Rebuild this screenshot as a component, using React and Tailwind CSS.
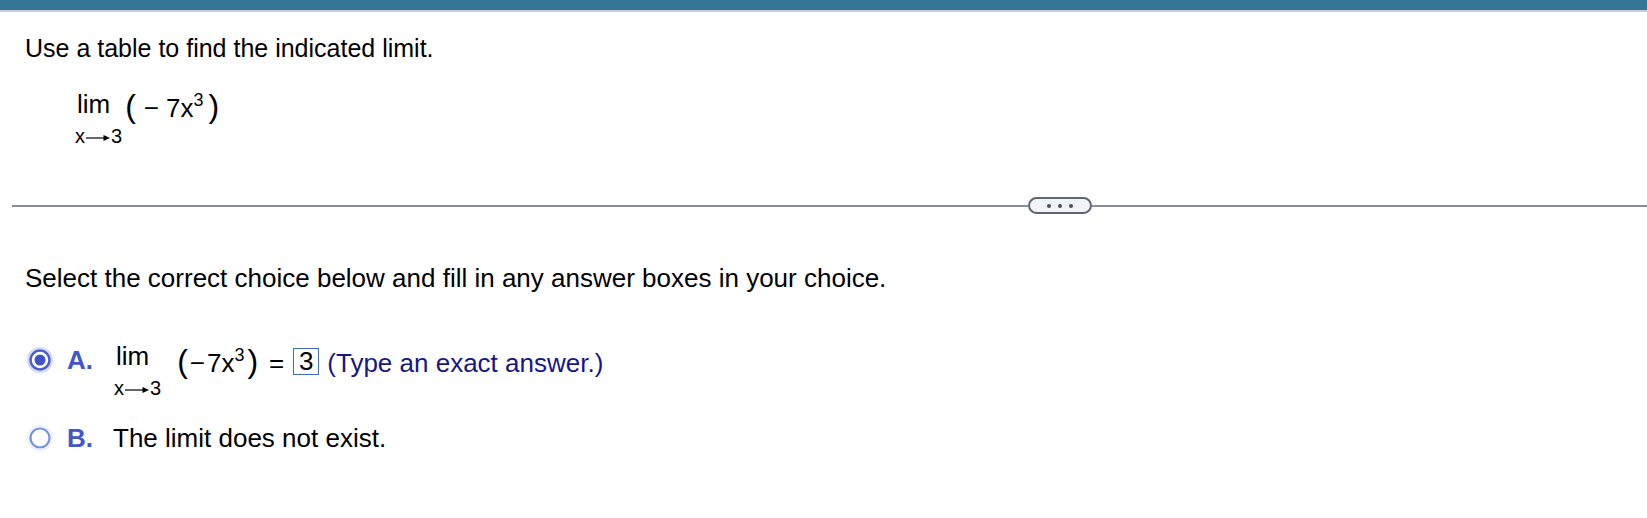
import React from "react";

function Arrow() {
  return (
    <svg width="26" height="10" viewBox="0 0 26 10" className="mt-[4px] shrink-0">
      <line x1="1" y1="5" x2="22" y2="5" stroke="#000" strokeWidth="1.2" />
      <path d="M18.5 2 L25 5 L18.5 8 Z" fill="#000" />
    </svg>
  );
}

function Lim() {
  return (
    <div className="flex flex-col items-start">
      <div className="ml-[2px] text-[26px] leading-[26px]">lim</div>
      <div className="mt-[9px] text-[20px] leading-[20px] whitespace-nowrap flex items-center">
        <span>x</span>
        <Arrow />
        <span>3</span>
      </div>
    </div>
  );
}

function Expr({ outer, minus, seven, close, children }) {
  return (
    <div className={"flex items-baseline whitespace-pre " + outer}>
      <span className="text-[32px] leading-none">(</span>
      <span className={"text-[26px] leading-none " + minus}>−</span>
      <span className={"text-[26px] leading-none " + seven}>
        7x
        <span className="text-[18px] leading-[0] align-[11px]">3</span>
      </span>
      <span className={"text-[32px] leading-none " + close}>)</span>
      {children}
    </div>
  );
}

function RadioOn() {
  return (
    <svg width="26" height="26" viewBox="0 0 26 26" className="shrink-0">
      <circle cx="13" cy="13" r="12" fill="none" stroke="#d3daf5" strokeWidth="2" />
      <circle cx="13" cy="13" r="9.5" fill="#fff" stroke="#4a5ed0" strokeWidth="2.5" />
      <circle cx="13" cy="13" r="5.5" fill="#4053c8" />
    </svg>
  );
}

function RadioOff() {
  return (
    <svg width="26" height="26" viewBox="0 0 26 26" className="shrink-0">
      <circle cx="13" cy="13" r="12" fill="none" stroke="#eef1fb" strokeWidth="2" />
      <circle cx="13" cy="13" r="9.5" fill="#fff" stroke="#7393e2" strokeWidth="2.2" />
    </svg>
  );
}

export default function App() {
  return (
    <div className="w-full h-[518px] overflow-hidden bg-white text-black font-['Liberation_Sans',Arial,sans-serif]">
      <div className="h-[10px] bg-[#357698]" />
      <div className="h-[2px] bg-[#c5ccd6]" />

      <div className="pl-[25px]">
        <p className="mt-[21px] text-[25px] leading-[30px]">Use a table to find the indicated limit.</p>
        <div className="mt-[28px] ml-[50px] flex items-start">
          <Lim />
          <Expr outer="ml-[3px] -mt-[1px]" minus="ml-[8px]" seven="ml-[7px]" close="ml-[5px]" />
        </div>
      </div>

      <div className="mt-[51px] pl-[12px] flex items-center h-[17px]">
        <div className="w-[1016px] h-[2px] bg-[#8a8e9b]" />
        <div className="w-[64px] h-[17px] rounded-full border-2 border-[#5f6673] bg-[#f1f3f6] flex items-center justify-center gap-[7px]">
          <span className="w-[4px] h-[4px] rounded-full bg-[#4a4f59]" />
          <span className="w-[4px] h-[4px] rounded-full bg-[#4a4f59]" />
          <span className="w-[4px] h-[4px] rounded-full bg-[#4a4f59]" />
        </div>
        <div className="flex-1 h-[2px] bg-[#8a8e9b]" />
      </div>

      <div className="pl-[25px]">
        <p className="mt-[49px] text-[26px] leading-[30px]">
          Select the correct choice below and fill in any answer boxes in your choice.
        </p>

        <div className="mt-[50px] flex items-start">
          <div className="ml-[2px] mt-[4px]">
            <RadioOn />
          </div>
          <div className="ml-[14px] mt-[4px] text-[26px] leading-[26px] font-bold text-[#4355c7]">A.</div>
          <div className="ml-[21px] flex items-start">
            <Lim />
            <Expr outer="ml-[16px] mt-[2px]" minus="ml-[2px]" seven="ml-[2px]" close="ml-[3px]">
              <span className="text-[26px] leading-none ml-[11px]">=</span>
              <span className="ml-[9px] inline-flex items-center justify-center w-[26px] h-[27px] border-[1.5px] border-[#3e6cc6] text-[26px] leading-none self-center">3</span>
              <span className="ml-[8px] text-[26px] leading-none text-[#161686]">(Type an exact answer.)</span>
            </Expr>
          </div>
        </div>

        <div className="mt-[27px] flex items-start">
          <div className="ml-[2px] mt-[0px]">
            <RadioOff />
          </div>
          <div className="ml-[14px] text-[26px] leading-[26px] font-bold text-[#4355c7]">B.</div>
          <div className="ml-[20px] text-[26px] leading-[26px]">The limit does not exist.</div>
        </div>
      </div>
    </div>
  );
}
